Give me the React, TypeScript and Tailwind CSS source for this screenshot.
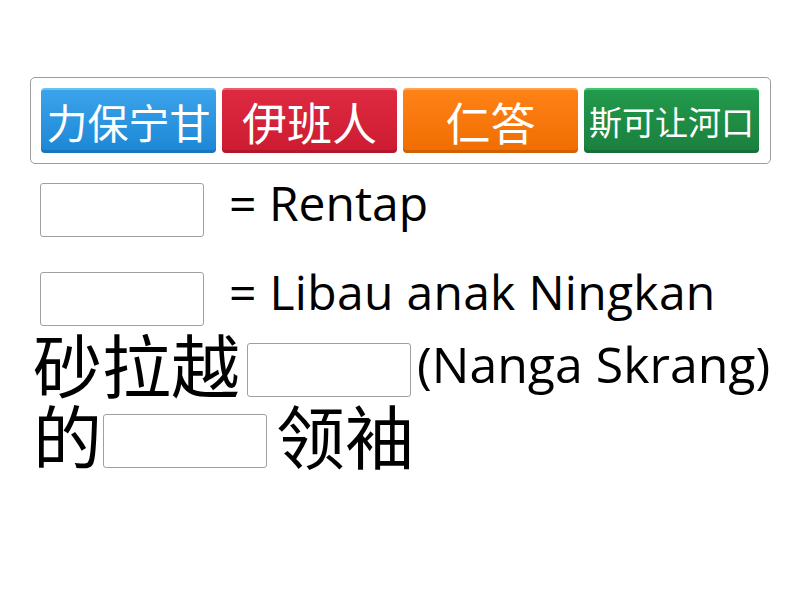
const TILES = [
  { label: "力保宁甘", size: "text-[41px]", cls: "bg-gradient-to-b from-[#3aa3ea] to-[#1b87d6] border-t-[#6cc0f2]" },
  { label: "伊班人", size: "text-[45px]", cls: "bg-gradient-to-b from-[#de2a40] to-[#cc1a31] border-t-[#e9606f]" },
  { label: "仁答", size: "text-[45px]", cls: "bg-gradient-to-b from-[#ff8216] to-[#f06d00] border-t-[#ffa255]" },
  { label: "斯可让河口", size: "text-[33px]", cls: "bg-gradient-to-b from-[#229a4c] to-[#1b7f3e] border-t-[#3dca6c]" },
];

function Blank({ className = "" }: { className?: string }) {
  return (
    <div className={`h-[54px] w-[164px] shrink-0 rounded-[3px] border border-[#a0a0a0] bg-white ${className}`} />
  );
}

const cjk = "font-['Noto_Sans_CJK_SC',sans-serif] text-[69px] leading-[56px] pb-[14px]";

export default function App() {
  return (
    <div className="h-[600px] w-[800px] bg-white font-['Open_Sans','Noto_Sans_CJK_SC',sans-serif] text-black">
      <div className="pt-[77px] pl-[30px]">
        {/* Tile bank */}
        <div className="flex w-[741px] gap-[6px] rounded-[5px] border border-[#9c9c9c] px-[10px] py-[10px]">
          {TILES.map((t) => (
            <div
              key={t.label}
              className={`flex h-[65px] w-[175px] items-center justify-center rounded-[4px] border-t-2 shadow-[inset_0_-3px_0_rgba(0,0,0,0.12)] ${t.cls}`}
            >
              <span className={`font-['Noto_Sans_CJK_SC',sans-serif] leading-none text-white ${t.size}`}>
                {t.label}
              </span>
            </div>
          ))}
        </div>
      </div>

      {/* Matching rows */}
      <div className="mt-[18px] flex h-[56px] items-center pl-[40px]">
        <Blank />
        <span className="ml-[25px] pb-[14px] text-[48px] leading-none">= Rentap</span>
      </div>
      <div className="mt-[33px] flex h-[56px] items-center pl-[40px]">
        <Blank />
        <span className="ml-[25px] pb-[14px] text-[48px] leading-none tracking-[0.3px]">= Libau anak Ningkan</span>
      </div>

      {/* Sentence */}
      <div className="mt-[15px] flex h-[56px] items-center pl-[33px]">
        <span className={cjk}>砂拉越</span>
        <Blank className="ml-[7px]" />
        <span className="ml-[6px] pb-[12px] text-[50px] leading-none">(Nanga Skrang)</span>
      </div>
      <div className="mt-[15px] flex h-[56px] items-center pl-[33px]">
        <span className={cjk}>的</span>
        <Blank className="ml-[1px]" />
        <span className={`ml-[9px] ${cjk}`}>领袖</span>
      </div>
    </div>
  );
}
